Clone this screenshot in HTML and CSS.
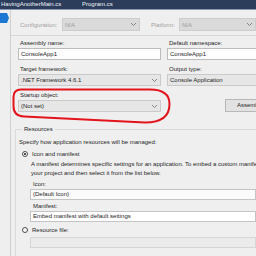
FILE: index.html
```html
<!DOCTYPE html>
<html>
<head>
<meta charset="utf-8">
<link rel="stylesheet" href="styles.css">
</head>
<body>
<div class="page">
  <div class="tabs">
    <span class="tab tab-first">HavingAnotherMain.cs</span>
    <span class="tab tab-second">Program.cs</span>
  </div>
  <div class="main">
    <div class="side"><div class="side-sel"></div></div>
    <div class="content">
      <div class="cfg">
        <span class="dlabel dlabel-config">Configuration:</span>
        <div class="dsel dsel-config"><span>N/A</span><svg class="chev" width="5" height="3" viewBox="0 0 5 3"><polyline points="0,0 2.5,2.5 5,0"/></svg></div>
        <span class="dlabel dlabel-plat">Platform:</span>
        <div class="dsel dsel-plat"><span>N/A</span><svg class="chev" width="5" height="3" viewBox="0 0 5 3"><polyline points="0,0 2.5,2.5 5,0"/></svg></div>
      </div>
      <div class="sep"></div>
      <div class="grid">
        <div class="col col-left">
          <div class="field">
            <div class="label">Assembly name:</div>
            <div class="input">ConsoleApp1</div>
          </div>
          <div class="field">
            <div class="label">Target framework:</div>
            <div class="select"><span>.NET Framework 4.6.1</span><svg class="chev" width="5" height="3" viewBox="0 0 5 3"><polyline points="0,0 2.5,2.5 5,0"/></svg></div>
          </div>
          <div class="field">
            <div class="label">Startup object:</div>
            <div class="select"><span>(Not set)</span><svg class="chev" width="5" height="3" viewBox="0 0 5 3"><polyline points="0,0 2.5,2.5 5,0"/></svg></div>
          </div>
        </div>
        <div class="col col-right">
          <div class="field">
            <div class="label">Default namespace:</div>
            <div class="input">ConsoleApp1</div>
          </div>
          <div class="field">
            <div class="label">Output type:</div>
            <div class="select"><span>Console Application</span></div>
          </div>
          <div class="field field-btn">
            <div class="button">Assembly Information...</div>
          </div>
        </div>
      </div>
      <div class="group">
        <div class="group-label">Resources</div>
        <div class="group-body">
          <div class="text specify">Specify how application resources will be managed:</div>
          <div class="radio-row"><span class="radio radio-on"></span><span class="text">Icon and manifest</span></div>
          <div class="desc">A manifest determines specific settings for an application. To embed a custom manifest, first add it to<br>your project and then select it from the list below.</div>
          <div class="sub-label">Icon:</div>
          <div class="sub-input sub-icon">(Default Icon)</div>
          <div class="sub-label">Manifest:</div>
          <div class="sub-input sub-manifest">Embed manifest with default settings</div>
          <div class="radio-row radio-row-res"><span class="radio"></span><span class="text">Resource file:</span></div>
          <div class="sub-input sub-res"></div>
        </div>
      </div>
    </div>
  </div>
  <svg class="highlight" width="256" height="256" viewBox="0 0 256 256">
    <path d="M 21 89.5 L 150 89.5 C 163 89.5 169.5 94 169.5 104 C 169.5 116 162 122.5 145 122.5 L 24 116.5 C 17 116.2 13.5 112 13.5 106 L 13.5 97 C 13.5 92 16 89.5 21 89.5 Z"/>
  </svg>
</div>
</body>
</html>
```
FILE: styles.css
```css
html, body {
  margin: 0;
  padding: 0;
}
body {
  background: #efefef;
  font-family: "Liberation Sans", Arial, sans-serif;
  font-size: 6px;
  color: #1e1e1e;
}
.page {
  position: relative;
  width: 256px;
  height: 256px;
  overflow: hidden;
}
.tabs {
  height: 9px;
  background: #2c3d5c;
  border-bottom: 1px solid #8a9ab5;
  display: flex;
  align-items: center;
  white-space: nowrap;
}
.tab {
  color: #f0f2f6;
  line-height: 9px;
}
.tab-first {
  padding-left: 1px;
  width: 81px;
}
.main {
  display: flex;
  height: 246px;
}
.side {
  width: 10px;
  flex: none;
  border-right: 1px solid #d0d0d0;
  background: #efefef;
}
.side-sel {
  margin-top: 3px;
  width: 9px;
  height: 10px;
  background: #1c78d4;
  clip-path: polygon(0 0, 7px 0, 9px 5px, 7px 10px, 0 10px);
}
.content {
  flex: 1;
  min-width: 0;
  white-space: nowrap;
}
.cfg {
  display: flex;
  align-items: center;
  height: 13px;
  margin-top: 8px;
  padding-left: 9px;
}
.dlabel {
  color: #a2a2a2;
  flex: none;
}
.dlabel-config {
  width: 42px;
}
.dlabel-plat {
  margin-left: 11px;
  width: 28px;
}
.dsel {
  box-sizing: border-box;
  height: 13px;
  background: #dadada;
  border: 1px solid #cdcdcd;
  color: #9a9a9a;
  display: flex;
  align-items: center;
  justify-content: space-between;
  padding: 0 3px 0 2px;
  flex: none;
}
.dsel-config {
  width: 78px;
}
.dsel-plat {
  width: 77px;
}
.chev {
  display: block;
  flex: none;
}
.chev polyline {
  fill: none;
  stroke: #7a7a7a;
  stroke-width: 0.9;
}
.sep {
  margin-top: 4px;
  height: 1px;
  background: #d6d6d6;
}
.grid {
  display: flex;
  gap: 6px;
  padding-left: 7px;
  margin-top: 3px;
}
.col-left {
  width: 143px;
  flex: none;
}
.col-right {
  width: 100px;
  flex: none;
}
.field {
  margin-bottom: 5px;
}
.label {
  height: 8px;
  line-height: 8px;
  padding-left: 2px;
  margin-bottom: 1px;
}
.input, .select {
  box-sizing: border-box;
  height: 12px;
  line-height: 10px;
  padding-left: 2px;
  border: 1px solid #bcbcbc;
  background: #fdfdfd;
  overflow: hidden;
}
.select {
  display: flex;
  align-items: center;
  justify-content: space-between;
  padding-right: 3px;
  background: #e6e6e6;
  border-color: #cacaca;
  line-height: normal;
}
.field-btn {
  padding-top: 8px;
}
.button {
  box-sizing: border-box;
  margin-left: 58px;
  width: 60px;
  height: 13px;
  line-height: 11px;
  padding-left: 11px;
  background: #e2e2e2;
  border: 1px solid #b8b8b8;
  overflow: hidden;
}
.group {
  position: relative;
  margin-left: 4px;
  border-top: 1px solid #dadada;
  border-left: 1px solid #dadada;
  border-bottom: 1px solid #d2d2d2;
  height: 126px;
  margin-top: 12px;
}
.group-label {
  position: absolute;
  top: -5px;
  left: 6px;
  height: 8px;
  line-height: 8px;
  padding: 0 2px;
  background: #efefef;
}
.group-body {
  padding-top: 8px;
  padding-left: 3px;
}
.text {
  line-height: 8px;
}
.specify {
  height: 8px;
}
.radio-row {
  display: flex;
  align-items: center;
  height: 8px;
  margin-top: 4px;
}
.radio {
  box-sizing: border-box;
  width: 6px;
  height: 6px;
  margin-left: 3px;
  margin-right: 4px;
  border-radius: 50%;
  border: 1px solid #4a4a4a;
  background: #fff;
  position: relative;
  flex: none;
}
.radio-on::after {
  content: "";
  position: absolute;
  left: 1px;
  top: 1px;
  width: 2px;
  height: 2px;
  border-radius: 50%;
  background: #1a1a1a;
}
.desc {
  margin-top: 2px;
  margin-left: 12px;
  line-height: 9px;
  height: 18px;
}
.sub-label {
  margin-left: 14px;
  height: 8px;
  line-height: 8px;
  margin-top: 2px;
}
.sub-input {
  box-sizing: border-box;
  margin-left: 11px;
  height: 11px;
  line-height: 9px;
  padding-left: 2px;
  border: 1px solid #c4c4c4;
  background: #fbfbfb;
  margin-top: 1px;
}
.sub-manifest {
  background: #ffffff;
}
.sub-res {
  background: #ebebeb;
  border-color: #d6d6d6;
  margin-top: 3px;
}
.radio-row-res {
  margin-top: 4px;
}
.highlight {
  position: absolute;
  left: 0;
  top: 0;
  pointer-events: none;
}
.highlight path {
  fill: none;
  stroke: #e3141c;
  stroke-width: 2;
}
```
